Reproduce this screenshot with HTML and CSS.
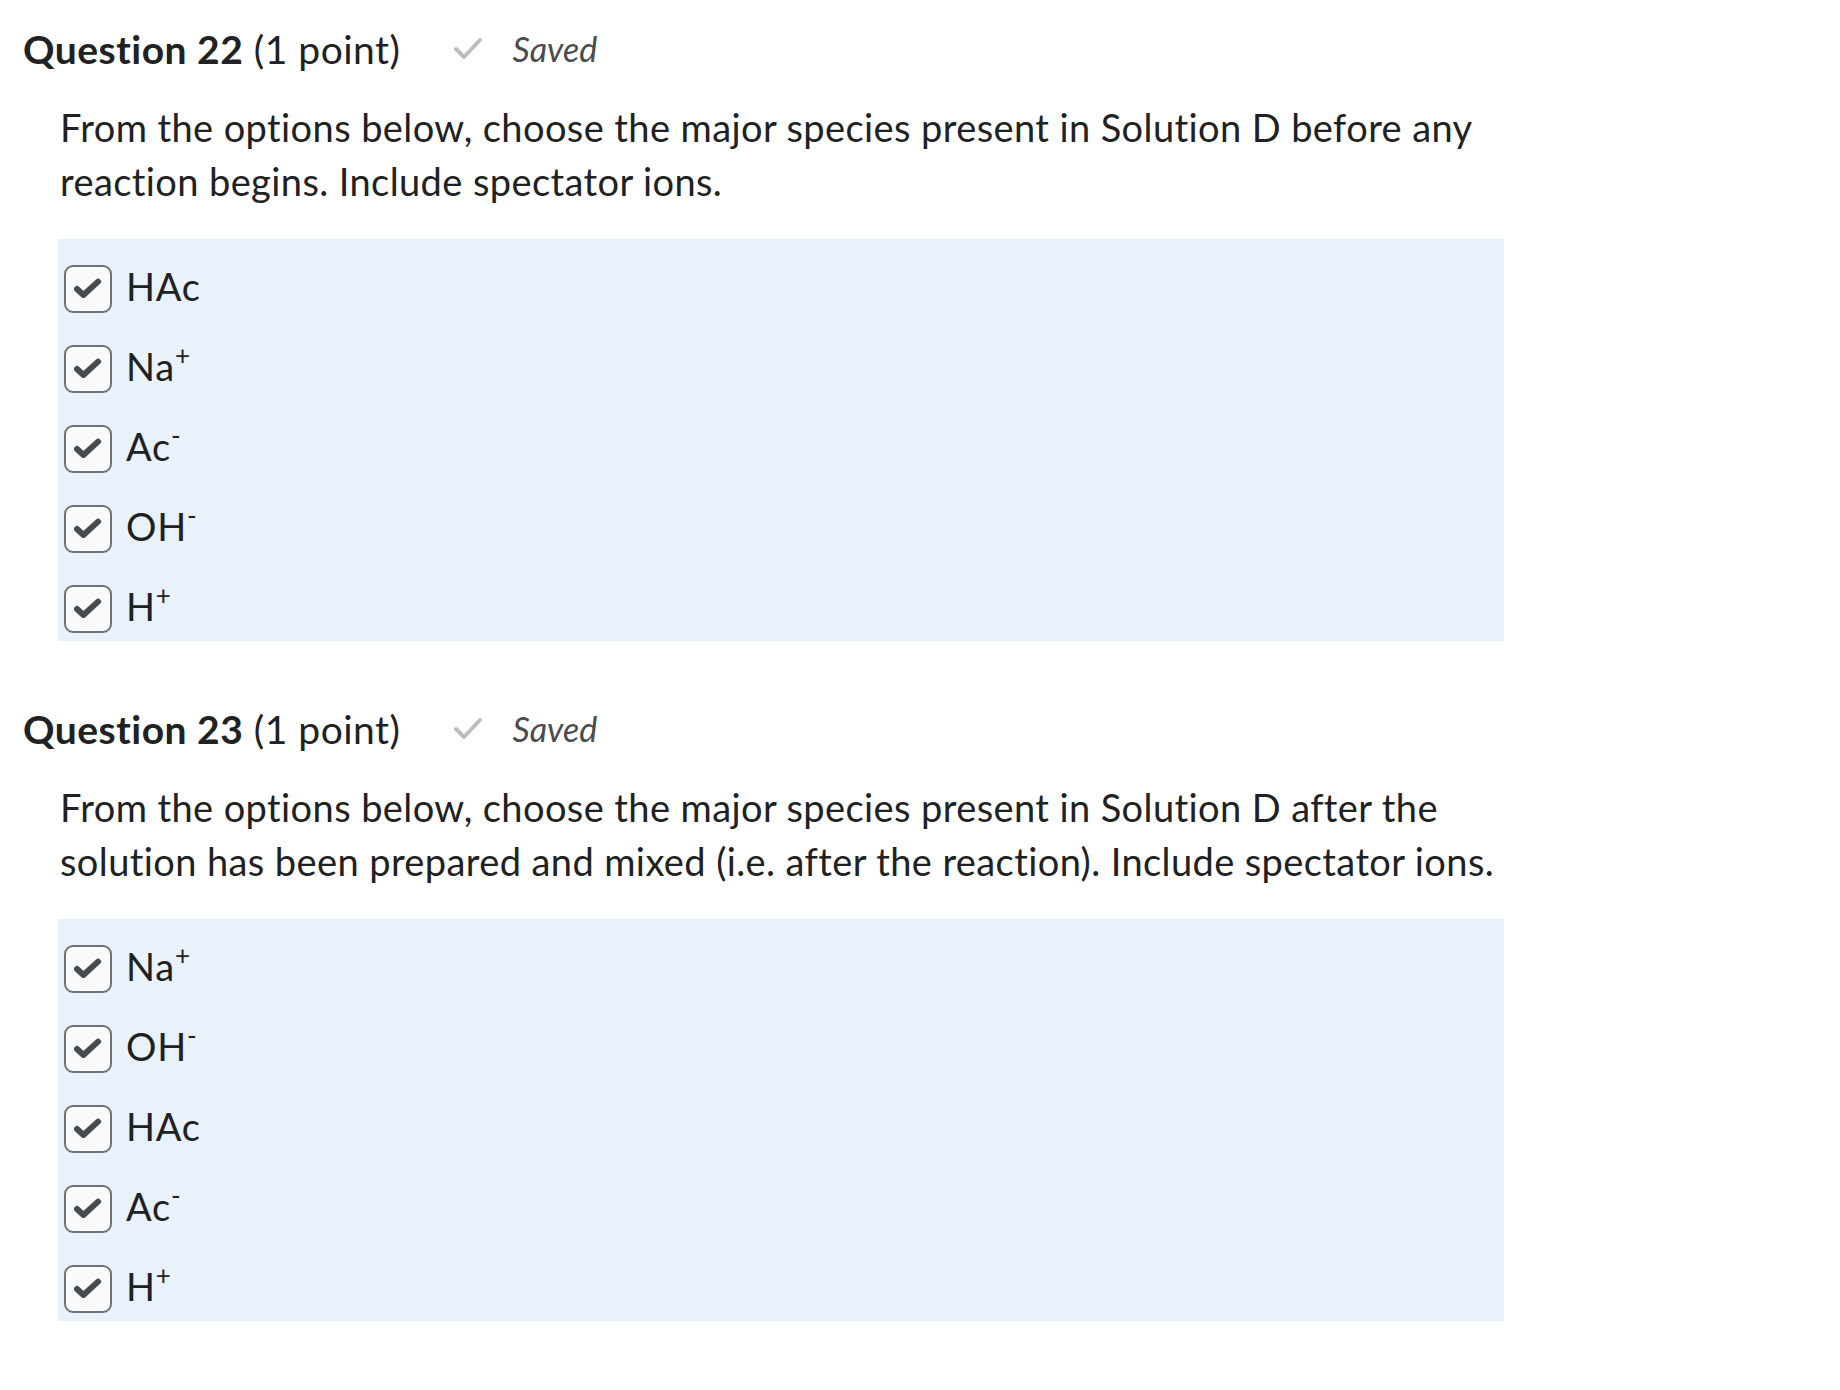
FILE: index.html
```html
<html>

<head>
    <title>Quiz</title>
    <link rel="stylesheet" href="styles.css">
</head>

<body>
    <!-- Question 22 -->
    <div class="question">
        <div class="question-header">
            <h2 class="question-title"><strong>Question 22</strong> (1 point)</h2>
            <span class="saved">
                <svg class="saved-check" viewBox="0 0 30 24" width="30" height="24"><path d="M3 12 L11 20 L27 3"/></svg>
                Saved
            </span>
        </div>
        <div class="question-body">
            <p class="question-text">From the options below, choose the major species present in Solution D before any reaction begins. Include spectator ions.</p>
            <div class="choices">
                <label class="choice"><span class="box"><svg viewBox="0 0 48 48"><path d="M12 24 L19 30.5 L35 16"/></svg></span><span class="choice-label">HAc</span></label>
                <label class="choice"><span class="box"><svg viewBox="0 0 48 48"><path d="M12 24 L19 30.5 L35 16"/></svg></span><span class="choice-label">Na<sup>+</sup></span></label>
                <label class="choice"><span class="box"><svg viewBox="0 0 48 48"><path d="M12 24 L19 30.5 L35 16"/></svg></span><span class="choice-label">Ac<sup>-</sup></span></label>
                <label class="choice"><span class="box"><svg viewBox="0 0 48 48"><path d="M12 24 L19 30.5 L35 16"/></svg></span><span class="choice-label">OH<sup>-</sup></span></label>
                <label class="choice"><span class="box"><svg viewBox="0 0 48 48"><path d="M12 24 L19 30.5 L35 16"/></svg></span><span class="choice-label">H<sup>+</sup></span></label>
            </div>
        </div>
    </div>

    <!-- Question 23 -->
    <div class="question">
        <div class="question-header">
            <h2 class="question-title"><strong>Question 23</strong> (1 point)</h2>
            <span class="saved">
                <svg class="saved-check" viewBox="0 0 30 24" width="30" height="24"><path d="M3 12 L11 20 L27 3"/></svg>
                Saved
            </span>
        </div>
        <div class="question-body">
            <p class="question-text">From the options below, choose the major species present in Solution D after the solution has been prepared and mixed (i.e. after the reaction). Include spectator ions.</p>
            <div class="choices">
                <label class="choice"><span class="box"><svg viewBox="0 0 48 48"><path d="M12 24 L19 30.5 L35 16"/></svg></span><span class="choice-label">Na<sup>+</sup></span></label>
                <label class="choice"><span class="box"><svg viewBox="0 0 48 48"><path d="M12 24 L19 30.5 L35 16"/></svg></span><span class="choice-label">OH<sup>-</sup></span></label>
                <label class="choice"><span class="box"><svg viewBox="0 0 48 48"><path d="M12 24 L19 30.5 L35 16"/></svg></span><span class="choice-label">HAc</span></label>
                <label class="choice"><span class="box"><svg viewBox="0 0 48 48"><path d="M12 24 L19 30.5 L35 16"/></svg></span><span class="choice-label">Ac<sup>-</sup></span></label>
                <label class="choice"><span class="box"><svg viewBox="0 0 48 48"><path d="M12 24 L19 30.5 L35 16"/></svg></span><span class="choice-label">H<sup>+</sup></span></label>
            </div>
        </div>
    </div>
</body>

</html>
```

FILE: styles.css
```css
body {
  margin: 0;
  padding: 22px 0 0 0;
  background: #ffffff;
  color: #202122;
  font-family: Lato, "Noto Sans", sans-serif;
}

/* One question block */
.question {
  margin-bottom: 61px;
}

.question-header {
  display: flex;
  align-items: flex-start;
  padding-left: 23px;
}

.question-title {
  margin: 0;
  font-size: 39px;
  line-height: 54px;
  font-weight: 400;
  letter-spacing: 0.5px;
}

.question-title strong {
  font-weight: 700;
}

/* Saved indicator */
.saved {
  display: flex;
  align-items: center;
  margin-left: 53px;
  font-size: 34px;
  line-height: 53px;
  font-style: italic;
  color: #494c4e;
}

.saved-check {
  margin-right: 29px;
  fill: none;
  stroke: #b9bdc1;
  stroke-width: 4;
  stroke-linecap: round;
  stroke-linejoin: round;
}

.question-body {
  margin-left: 58px;
  width: 1446px;
}

.question-text {
  margin: 24px 0 31px 2px;
  font-size: 38px;
  line-height: 54px;
  letter-spacing: 0.4px;
}

/* Choice list */
.choices {
  display: flex;
  flex-direction: column;
  gap: 32px;
  padding: 26px 6px 8px;
  background-color: #e9f1fb;
}

.choice {
  display: flex;
  align-items: center;
  height: 48px;
  font-size: 38px;
  line-height: 48px;
  letter-spacing: 0.8px;
}

.choice-label {
  margin-bottom: 7px;
}

.choice sup {
  font-size: 26px;
  line-height: 0;
  vertical-align: 16px;
}

/* The checkbox */
.box {
  box-sizing: border-box;
  width: 48px;
  height: 48px;
  margin-right: 14px;
  border: 2px solid #6f7479;
  border-radius: 9px;
  background-color: #f9fafc;
  flex-shrink: 0;
}

.box svg {
  display: block;
  width: 44px;
  height: 44px;
  fill: none;
  stroke: #494c4e;
  stroke-width: 6.5;
  stroke-linecap: round;
  stroke-linejoin: round;
}
```
